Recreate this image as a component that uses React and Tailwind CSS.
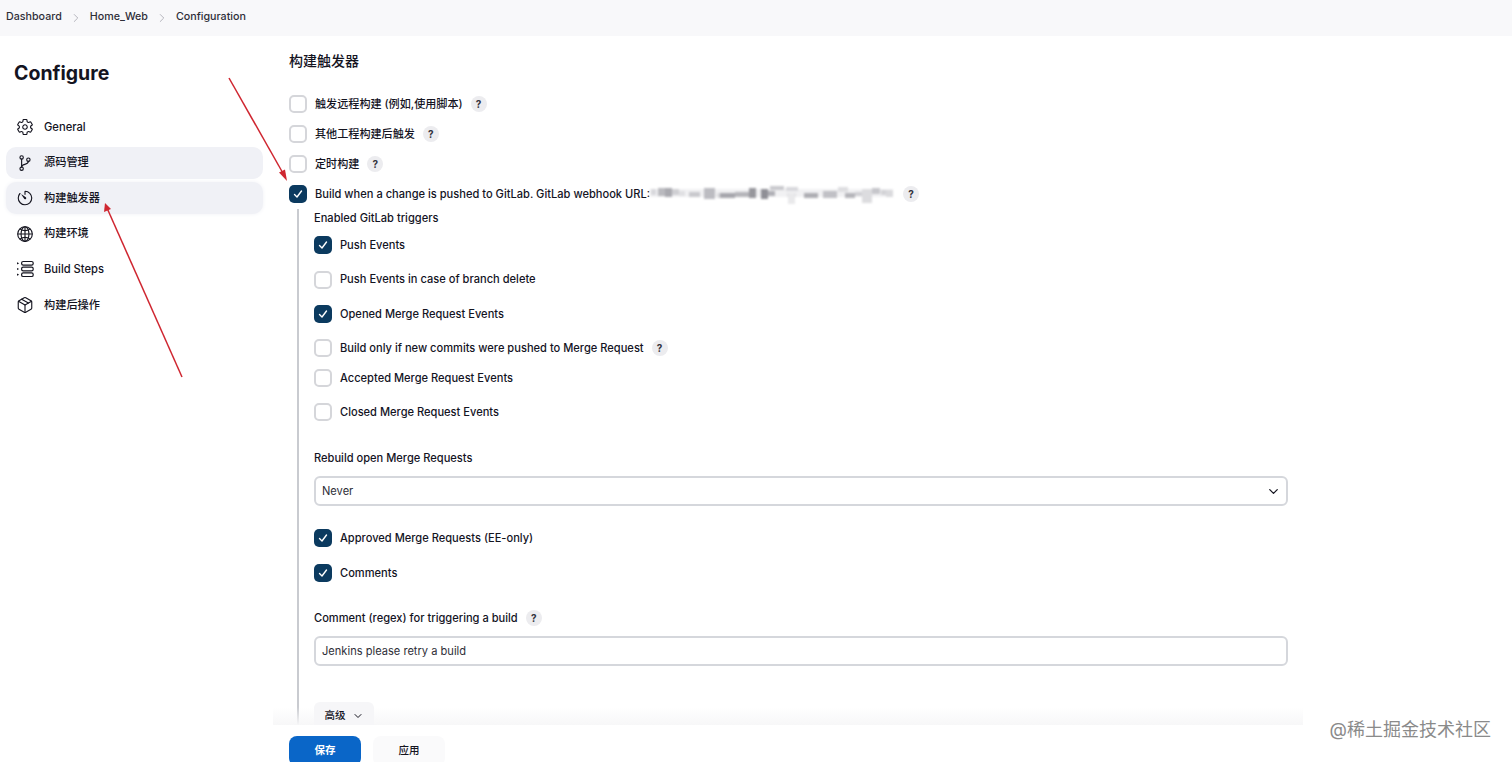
import { ChevronDown, ChevronRight, Package } from 'lucide-react';
import { IoSettingsOutline, IoGitBranchOutline, IoTimerOutline, IoGlobeOutline } from 'react-icons/io5';

function ListIcon() {
  return (
    <svg viewBox="0 0 18 18" className="h-[18px] w-[18px]" fill="none" stroke="currentColor" strokeWidth="1.2">
      <rect x="5.6" y="1.5" width="11.6" height="3.6" rx="1.6" />
      <rect x="5.6" y="7.2" width="11.6" height="3.6" rx="1.6" />
      <rect x="5.6" y="12.9" width="11.6" height="3.6" rx="1.6" />
      <path d="M1 2.2 3.2 3.3 1 4.4ZM1 7.9 3.2 9 1 10.1ZM1 13.6 3.2 14.7 1 15.8Z" fill="currentColor" stroke="none" />
    </svg>
  );
}

function SideItem({ icon, label, className = '' }) {
  return (
    <div className={`flex h-[32px] items-center gap-[10px] rounded-[10px] pl-[10px] text-[#14141f] ${className}`}>
      <span className="flex w-[18px] justify-center text-[18px]">{icon}</span>
      <span className="text-[11.2px] font-medium">{label}</span>
    </div>
  );
}

function Box({ checked }) {
  if (checked) {
    return (
      <span className="flex h-[18px] w-[18px] shrink-0 items-center justify-center rounded-[5px] bg-[#0b3a5f]">
        <svg viewBox="0 0 12 12" className="h-3 w-3" fill="none" stroke="white" strokeWidth="1.4" strokeLinecap="round" strokeLinejoin="round">
          <path d="M2.5 6.5 5 9l4.5-6" />
        </svg>
      </span>
    );
  }
  return <span className="h-[18px] w-[18px] shrink-0 rounded-[5px] border-2 border-[#d5d6da] bg-white" />;
}

function Help() {
  return (
    <span className="flex h-[16px] w-[16px] shrink-0 items-center justify-center rounded-full bg-[#ececef] text-[10px] font-bold text-[#33333d]">?</span>
  );
}

function Row({ checked, label, help, className = '' }) {
  return (
    <div className={`flex items-center text-[11.1px] font-medium text-[#14141f] ${className}`}>
      <Box checked={checked} />
      <span className="ml-[8px] whitespace-nowrap">{label}</span>
      {help && <span className="ml-[8px] flex"><Help /></span>}
    </div>
  );
}

// mosaic over the webhook address, x/y in the picture's pixels from the start of the address
const blocks = [
  [0, 5, 243, 8, '#f1f1f3'],
  [1, 5, 5, 6, '#d8d8dc'], [8, 4, 7, 8, '#b9b9be'], [15, 4, 7, 9, '#a9a9af'], [22, 5, 7, 6, '#cfcfd3'],
  [29, 7, 6, 5, '#e0e0e3'], [39, 8, 11, 5, '#c9c9cd'], [54, 4, 11, 11, '#bcbcc1'], [67, 9, 6, 5, '#dadadd'],
  [70, 9, 15, 5, '#a6a6ac'], [85, 8, 15, 5, '#b5b5ba'], [99, 4, 7, 10, '#96969c'], [111, 5, 7, 10, '#8f8f96'],
  [118, 7, 7, 5, '#b0b0b6'], [120, 2, 14, 4, '#c9c9cd'], [136, 3, 12, 4, '#d8d8dc'], [137, 9, 9, 4, '#e0e0e3'],
  [138, 9, 7, 12, '#e9e9eb'], [154, 9, 14, 5, '#adadb3'], [173, 7, 14, 7, '#c0c0c5'], [188, 3, 10, 5, '#dedee1'],
  [195, 9, 10, 5, '#b5b5ba'], [205, 8, 12, 4, '#d0d0d4'], [212, 5, 10, 14, '#dcdcdf'], [222, 4, 8, 6, '#c6c6cb'],
  [231, 6, 6, 5, '#d2d2d6'], [236, 6, 7, 7, '#dadadd'],
];

function Mosaic() {
  return (
    <svg width="245" height="20" className="-my-[1px] shrink-0 blur-[0.8px]">
      {blocks.map(([x, y, w, h, c], i) => (
        <rect key={i} x={x} y={y} width={w} height={h} fill={c} />
      ))}
    </svg>
  );
}

function Arrows() {
  return (
    <svg className="pointer-events-none absolute left-0 top-0 h-[762px] w-[1512px]" fill="none">
      <path d="M229 78 284 175" stroke="#cf2630" strokeWidth="1.5" />
      <path d="M287 181 279 172.5 285 169.5Z" fill="#cf2630" />
      <path d="M182 377 107 208" stroke="#cf2630" strokeWidth="1.5" />
      <path d="M105 203 111 209 104 212Z" fill="#cf2630" />
    </svg>
  );
}

export default function App() {
  return (
    <div className="relative flex h-[762px] w-[1512px] flex-col overflow-hidden bg-white font-['Inter','Noto_Sans_CJK_SC',sans-serif] text-[#14141f]">
      <header className="flex h-[36px] shrink-0 items-center bg-[#f8f8fa] pb-[1px] pl-[6px] text-[10.7px] font-medium text-[#2e2e38]">
        <span>Dashboard</span>
        <ChevronRight className="mx-[7px] h-[14px] w-[14px] text-[#9a9aa3]" strokeWidth={1.2} />
        <span>Home_Web</span>
        <ChevronRight className="mx-[7px] h-[14px] w-[14px] text-[#9a9aa3]" strokeWidth={1.2} />
        <span>Configuration</span>
      </header>

      <div className="flex min-h-0 flex-1">
        <aside className="w-[289px] shrink-0 pl-[6px] pr-[26px]">
          <h1 className="ml-[8px] mt-[24px] text-[19.5px] font-bold leading-[26px] text-[#14141f]">Configure</h1>
          <div className="mt-[25px] flex flex-col gap-[3.6px]">
            <SideItem icon={<IoSettingsOutline />} label="General" />
            <SideItem icon={<IoGitBranchOutline />} label="源码管理" className="bg-[#f0f1f6]" />
            <SideItem icon={<IoTimerOutline />} label="构建触发器" className="bg-[#f0f1f6] shadow-[0_0_4px_#f0f1f6]" />
            <SideItem icon={<IoGlobeOutline />} label="构建环境" />
            <SideItem icon={<ListIcon />} label="Build Steps" />
            <SideItem icon={<Package className="h-[18px] w-[18px]" strokeWidth={1.5} />} label="构建后操作" />
          </div>
        </aside>

        <main className="flex min-w-0 flex-1 flex-col">
          <div className="min-h-0 flex-1 overflow-hidden">
            <h2 className="mt-[13px] h-[24px] text-[14px] font-medium leading-[24px]">构建触发器</h2>
            <div className="mt-[16px] flex flex-col">
              <Row label="触发远程构建 (例如,使用脚本)" help className="h-[30px]" />
              <Row label="其他工程构建后触发" help className="h-[30px]" />
              <Row label="定时构建" help className="h-[30px]" />
              <div className="flex h-[30px] items-center text-[11.1px] font-medium">
                <Box checked />
                <span className="ml-[8px] whitespace-nowrap">Build when a change is pushed to GitLab. GitLab webhook URL:</span>
                <Mosaic />
                <span className="ml-[8px] flex"><Help /></span>
              </div>
            </div>

            <div className="ml-[8px] w-[991px] border-l-2 border-[#c9cbd0] pl-[15px] text-[11.1px] font-medium">
              <div className="flex h-[18px] items-center">Enabled GitLab triggers</div>
              <Row checked label="Push Events" className="mt-[1px] h-[34px]" />
              <Row label="Push Events in case of branch delete" className="h-[35px]" />
              <Row checked label="Opened Merge Request Events" className="h-[34px]" />
              <Row label="Build only if new commits were pushed to Merge Request" help className="h-[34px]" />
              <Row label="Accepted Merge Request Events" className="h-[26px]" />
              <Row label="Closed Merge Request Events" className="mt-[4px] h-[34px]" />

              <div className="mt-[19px] flex h-[20px] items-center">Rebuild open Merge Requests</div>
              <div className="mt-[8px] flex h-[30px] items-center justify-between rounded-[6px] border-2 border-[#d5d7dc] pl-[6px] pr-[5px] font-normal text-[#2e2e38]">
                <span>Never</span>
                <ChevronDown className="h-[15px] w-[15px] text-[#14141f]" strokeWidth={2} />
              </div>

              <Row checked label="Approved Merge Requests (EE-only)" className="mt-[15px] h-[34px]" />
              <Row checked label="Comments" className="mt-[1px] h-[34px]" />

              <div className="mt-[18px] flex h-[20px] items-center">
                Comment (regex) for triggering a build
                <span className="ml-[8px] flex"><Help /></span>
              </div>
              <div className="mt-[8px] flex h-[30px] items-center rounded-[6px] border-2 border-[#d5d7dc] pl-[6px] font-normal text-[#2e2e38]">
                Jenkins please retry a build
              </div>

              <div className="relative z-10 mt-[36px] flex h-[28px] w-[60px] items-center justify-center gap-[6px] rounded-[6px] bg-[#f6f6f8] text-[10.5px]">
                高级
                <ChevronDown className="h-[12px] w-[12px]" strokeWidth={2} />
              </div>
            </div>
          </div>

          <footer className="relative flex h-[37px] shrink-0 items-start gap-[12px] bg-white pt-[11px]">
            <div className="pointer-events-none absolute bottom-full left-[-16px] h-[18px] w-[1030px] bg-gradient-to-b from-transparent to-[#f7f7f8]" />
            <div className="flex h-[30px] w-[72px] items-center justify-center rounded-[8px] bg-[#0a66c8] text-[10.5px] font-semibold text-white">保存</div>
            <div className="flex h-[30px] w-[72px] items-center justify-center rounded-[8px] bg-[#fafafb] text-[10.5px] font-medium">应用</div>
          </footer>
        </main>
      </div>

      <span className="absolute bottom-[20px] right-[21px] text-[18px] leading-[24px] text-[#8a8a8a]">@稀土掘金技术社区</span>
      <Arrows />
    </div>
  );
}
